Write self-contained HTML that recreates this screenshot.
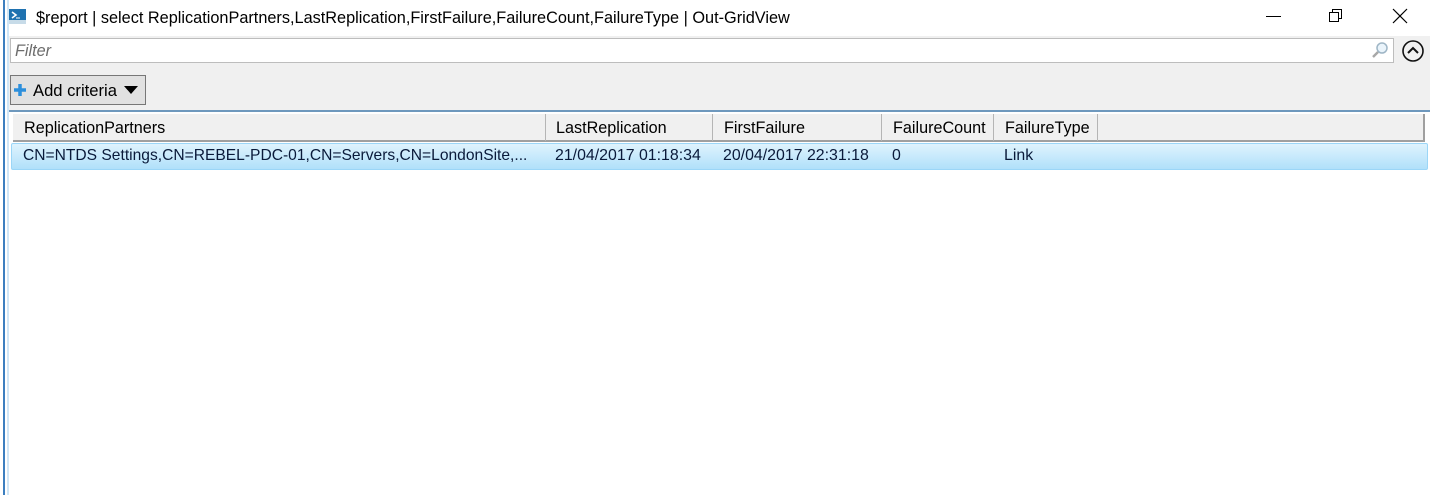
<!DOCTYPE html>
<html><head><style>
*{margin:0;padding:0;box-sizing:border-box}
body{width:1430px;height:495px;overflow:hidden;background:#fff;font-family:"Liberation Sans",sans-serif;position:relative;color:#000}
.a{position:absolute}
.t{font-size:16.2px;white-space:nowrap}
.r{font-size:15.9px}
</style></head><body>
<div class="a" style="left:0;top:0;width:3px;height:495px;background:#fff"></div>
<div class="a" style="left:3px;top:0;width:2px;height:495px;background:#3c7fc0"></div>
<div class="a" style="left:7px;top:0;width:2px;height:495px;background:#cfe6f7"></div>
<div class="a" style="left:9px;top:0;width:1421px;height:36px;background:#fff"></div>
<svg class="a" style="left:8px;top:7px" width="20" height="20"><rect x="1" y="2" width="17" height="15" fill="#1f72b0"/><rect x="1" y="13" width="17" height="4" fill="#c7dbe8"/><path d="M4 5 L8 8 L4 11" stroke="#fff" stroke-width="1.6" fill="none"/><path d="M8 11h4" stroke="#fff"/></svg>
<div class="a t" style="left:36px;top:9px;font-size:16.3px">$report | select ReplicationPartners,LastReplication,FirstFailure,FailureCount,FailureType | Out-GridView</div>
<div class="a" style="left:1266px;top:16px;width:15px;height:1px;background:#000"></div>
<svg class="a" style="left:1328px;top:8px" width="16" height="16"><rect x="1.5" y="4.5" width="9" height="9" fill="#fff" stroke="#000"/><path d="M4.5 4.5V1.5h9v9h-3" fill="none" stroke="#000"/></svg>
<svg class="a" style="left:1392px;top:8px" width="16" height="16"><path d="M1 1L15 15M15 1L1 15" stroke="#000" stroke-width="1.2"/></svg>
<div class="a" style="left:9px;top:36px;width:1421px;height:75px;background:#f0f0f0"></div>
<div class="a" style="left:10px;top:38px;width:1384px;height:25px;background:#fff;border:1px solid #bdbdbd"></div>
<div class="a t" style="left:15px;top:42px;font-style:italic;color:#6d6d6d">Filter</div>
<svg class="a" style="left:1370px;top:40px" width="20" height="20"><circle cx="12" cy="8" r="5" fill="#eaf4fb" stroke="#9fb6c6" stroke-width="1.5"/><path d="M8 12L3 17" stroke="#a8a8a8" stroke-width="2.5"/></svg>
<svg class="a" style="left:1401px;top:39px" width="24" height="24"><circle cx="12" cy="12" r="10" fill="none" stroke="#111" stroke-width="1.6"/><path d="M7 14L12 9L17 14" fill="none" stroke="#111" stroke-width="2"/></svg>
<div class="a" style="left:10px;top:75px;width:136px;height:30px;background:#e1e1e1;border:1px solid #777"></div>
<svg class="a" style="left:13px;top:83px" width="14" height="14"><path d="M7 1v12M1 7h12" stroke="#2d8fdc" stroke-width="3.5"/></svg>
<div class="a t" style="left:33px;top:81px;font-size:16.6px">Add criteria</div>
<svg class="a" style="left:124px;top:86px" width="14" height="9"><path d="M0 0h14L7 8z" fill="#000"/></svg>
<div class="a" style="left:9px;top:110px;width:1421px;height:2px;background:#6e98bd"></div>
<div class="a" style="left:13px;top:114px;width:1412px;height:28px;background:#f0f0f0;border-right:2px solid #a0a0a0;border-bottom:2px solid #a0a0a0"></div>
<div class="a" style="left:545px;top:114px;width:1px;height:27px;background:#b5b5b5"></div>
<div class="a" style="left:712px;top:114px;width:1px;height:27px;background:#b5b5b5"></div>
<div class="a" style="left:881px;top:114px;width:1px;height:27px;background:#b5b5b5"></div>
<div class="a" style="left:993px;top:114px;width:1px;height:27px;background:#b5b5b5"></div>
<div class="a" style="left:1097px;top:114px;width:1px;height:27px;background:#b5b5b5"></div>
<div class="a t" style="left:24px;top:119px">ReplicationPartners</div>
<div class="a t" style="left:556px;top:119px">LastReplication</div>
<div class="a t" style="left:724px;top:119px">FirstFailure</div>
<div class="a t" style="left:893px;top:119px">FailureCount</div>
<div class="a t" style="left:1005px;top:119px">FailureType</div>
<div class="a" style="left:11px;top:143px;width:1417px;height:27px;background:linear-gradient(#dff3fd,#b0e0fa);border:1px solid #9bd6f7;border-radius:2px"></div>
<div class="a t r" style="left:23px;top:147px;color:#0a1a3a;font-size:15.6px">CN=NTDS Settings,CN=REBEL-PDC-01,CN=Servers,CN=LondonSite,...</div>
<div class="a t r" style="left:555px;top:147px;color:#0a1a3a">21/04/2017 01:18:34</div>
<div class="a t r" style="left:723px;top:147px;color:#0a1a3a">20/04/2017 22:31:18</div>
<div class="a t r" style="left:892px;top:147px;color:#0a1a3a">0</div>
<div class="a t r" style="left:1004px;top:147px;color:#0a1a3a">Link</div>
</body></html>
